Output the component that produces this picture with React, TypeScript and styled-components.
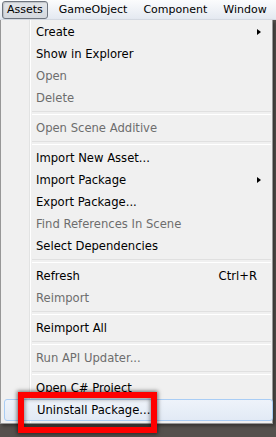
import * as React from "react";
import styled, { createGlobalStyle } from "styled-components";

const GlobalStyle = createGlobalStyle`
  html, body {
    margin: 0;
    padding: 0;
    background: #55514d;
  }
  * {
    box-sizing: border-box;
  }
`;

const Root = styled.div`
  position: relative;
  width: 276px;
  height: 437px;
  overflow: hidden;
  background: #55514d;
  font-family: "DejaVu Sans", "Liberation Sans", sans-serif;
  font-size: 11.6px;
`;

const MenuBar = styled.div`
  display: flex;
  align-items: center;
  height: 20px;
  padding: 0 0 0 2px;
  overflow: hidden;
  font-size: 11px;
  background: linear-gradient(#fbfcfd, #e4e9f1);
  border-bottom: 1px solid #d8dde5;
`;

interface BarItemProps {
  open?: boolean;
}

const BarItem = styled.div`
  height: 18px;
  flex-shrink: 0;
  display: flex;
  align-items: center;
  padding: 0 ${(p: BarItemProps) => (p.open ? "4px" : "7px")};
  margin-right: ${(p: BarItemProps) => (p.open ? "3px" : "0")};
  color: #000;
  white-space: nowrap;
  border: 1px solid ${(p: BarItemProps) => (p.open ? "#6f7680" : "transparent")};
  border-radius: 3px;
  background: ${(p: BarItemProps) =>
    p.open ? "linear-gradient(#e3e6ea, #d4d8de)" : "transparent"};
  box-shadow: ${(p: BarItemProps) =>
    p.open ? "inset 1px 1px 1px rgba(0,0,0,0.15)" : "none"};
`;

const Panel = styled.div`
  width: 273px;
  height: 404px;
  background: #f0f0f0;
  border: 1px solid #979797;
  border-top: none;
  padding: 1px 0 0 2px;
  box-shadow: 2px 2px 3px rgba(0, 0, 0, 0.35);
  background-image: linear-gradient(
    to right,
    transparent 28px,
    #e2e3e3 28px,
    #e2e3e3 29px,
    #ffffff 29px,
    #ffffff 30px,
    transparent 30px
  );
`;

interface ItemProps {
  disabled?: boolean;
  highlighted?: boolean;
}

const Item = styled.div`
  height: 22px;
  display: flex;
  align-items: center;
  padding: 0 10px 0 ${(p: ItemProps) => (p.highlighted ? "32px" : "33px")};
  color: ${(p: ItemProps) => (p.disabled ? "#6d6d6d" : "#000")};
  white-space: nowrap;
  border: ${(p: ItemProps) =>
    p.highlighted ? "1px solid #a9cdf5" : "none"};
  border-radius: 3px;
  margin-left: ${(p: ItemProps) => (p.highlighted ? "1px" : "0")};
  margin-right: ${(p: ItemProps) => (p.highlighted ? "-1px" : "0")};
  background: ${(p: ItemProps) =>
    p.highlighted ? "linear-gradient(#eef3fa, #e2eaf5)" : "transparent"};
`;

const Label = styled.span`
  flex: 1;
`;

const Shortcut = styled.span`
  margin-right: 5px;
`;

const Arrow = styled.span`
  width: 0;
  height: 0;
  margin-right: 1px;
  border-top: 3.5px solid transparent;
  border-bottom: 3.5px solid transparent;
  border-left: 4px solid #000;
`;

const Separator = styled.div`
  height: 8px;
  margin-left: 29px;
  margin-right: 1px;
  display: flex;
  align-items: center;
  &::after {
    content: "";
    flex: 1;
    height: 2px;
    border-top: 1px solid #e0e0e0;
    border-bottom: 1px solid #ffffff;
  }
`;

const Callout = styled.div`
  position: absolute;
  left: 18px;
  top: 392px;
  width: 139px;
  height: 41px;
  border: 6px solid #ff0000;
  box-shadow: 0 0 4px 1px rgba(0, 0, 0, 0.55),
    inset 0 0 4px 1px rgba(0, 0, 0, 0.45);
  pointer-events: none;
`;

type Entry =
  | { sep: true }
  | {
      sep?: false;
      label: string;
      disabled?: boolean;
      sub?: boolean;
      shortcut?: string;
      highlighted?: boolean;
    };

const entries: Entry[] = [
  { label: "Create", sub: true },
  { label: "Show in Explorer" },
  { label: "Open", disabled: true },
  { label: "Delete", disabled: true },
  { sep: true },
  { label: "Open Scene Additive", disabled: true },
  { sep: true },
  { label: "Import New Asset..." },
  { label: "Import Package", sub: true },
  { label: "Export Package..." },
  { label: "Find References In Scene", disabled: true },
  { label: "Select Dependencies" },
  { sep: true },
  { label: "Refresh", shortcut: "Ctrl+R" },
  { label: "Reimport", disabled: true },
  { sep: true },
  { label: "Reimport All" },
  { sep: true },
  { label: "Run API Updater...", disabled: true },
  { sep: true },
  { label: "Open C# Project" },
  { label: "Uninstall Package...", highlighted: true },
];

const App = () => {
  return (
    <Root>
      <GlobalStyle />
      <MenuBar>
        <BarItem open>Assets</BarItem>
        <BarItem>GameObject</BarItem>
        <BarItem>Component</BarItem>
        <BarItem>Window</BarItem>
      </MenuBar>
      <Panel>
        {entries.map((e, i) =>
          e.sep ? (
            <Separator key={i} />
          ) : (
            <Item key={i} disabled={e.disabled} highlighted={e.highlighted}>
              <Label>{e.label}</Label>
              {e.shortcut && <Shortcut>{e.shortcut}</Shortcut>}
              {e.sub && <Arrow />}
            </Item>
          )
        )}
      </Panel>
      <Callout />
    </Root>
  );
};

export default App;
